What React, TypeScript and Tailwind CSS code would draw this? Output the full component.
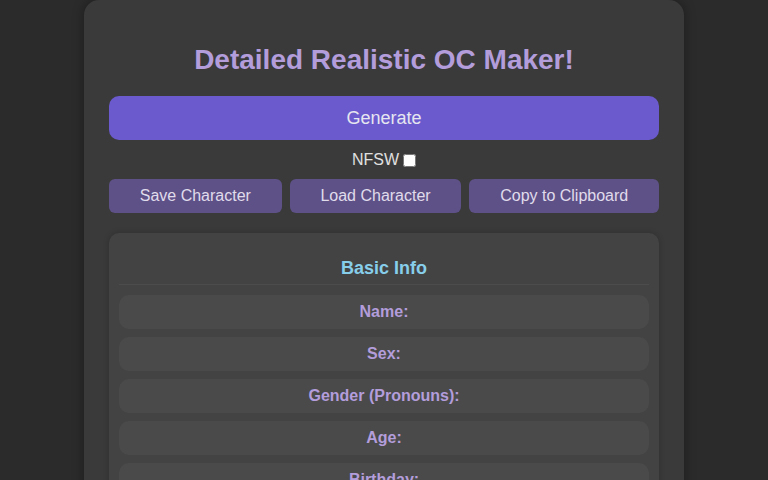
const fields = ["Name:", "Sex:", "Gender (Pronouns):", "Age:", "Birthday:", "Height:", "Weight:"];

export default function App() {
  return (
    <div className="min-h-screen bg-[#2b2b2b] font-['Liberation_Sans',Arial,sans-serif] text-[#e0e0e0]">
      <div className="mx-auto w-[600px] rounded-[15px] bg-[#3a3a3a] px-[25px] pb-[25px] shadow-[0_0_12px_rgba(0,0,0,0.35)]">
        <h1 className="pt-[44px] pb-[20px] text-center text-[28px] font-bold leading-[32px] text-[#b39ddb]">
          Detailed Realistic OC Maker!
        </h1>

        <button className="h-[44px] w-full rounded-[10px] bg-[#6a5acd] text-[18px] text-[#e6e6f0]">
          Generate
        </button>

        <div className="mt-[11px] flex items-center justify-center gap-[4px] text-[16px] leading-[18px]">
          <span>NFSW</span>
          <input type="checkbox" className="h-[13px] w-[13px]" />
        </div>

        <div className="mt-[10px] flex gap-[8px]">
          {["Save Character", "Load Character", "Copy to Clipboard"].map((t) => (
            <button
              key={t}
              className="h-[34px] flex-auto whitespace-nowrap rounded-[6px] bg-[#5e5187] px-[28px] text-[16px] text-[#e0dcec]"
            >
              {t}
            </button>
          ))}
        </div>

        <div className="mt-[20px] rounded-[10px] bg-[#434343] px-[10px] pb-[10px] pt-[25px] shadow-[0_0_6px_rgba(0,0,0,0.2)]">
          <h2 className="border-b border-[#4c4c4c] pb-[5px] text-center text-[18px] font-bold leading-[21px] text-[#87ceeb]">
            Basic Info
          </h2>
          <div className="mt-[10px] flex flex-col gap-[8px]">
            {fields.map((f) => (
              <div
                key={f}
                className="flex h-[34px] items-center justify-center rounded-[10px] bg-[#4a4a4a] text-[16px] font-bold text-[#b39ddb]"
              >
                {f}
              </div>
            ))}
          </div>
        </div>
      </div>
    </div>
  );
}
